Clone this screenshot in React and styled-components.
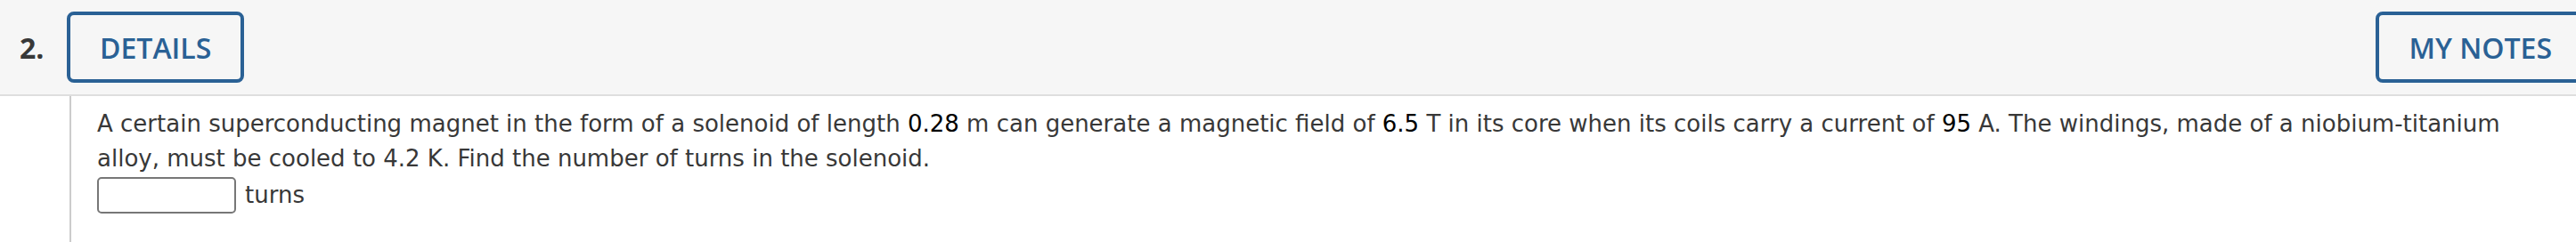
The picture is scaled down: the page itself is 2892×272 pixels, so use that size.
import styled, { createGlobalStyle } from "styled-components";

const GlobalStyle = createGlobalStyle`
  html, body {
    margin: 0;
    padding: 0;
    background: #fff;
    overflow: hidden;
  }
`;

function App() {
  return (
    <>
      <GlobalStyle />
      <Question>
        <Header>
          <Number>2.</Number>
          <HeaderButton>DETAILS</HeaderButton>
          <Spacer />
          <HeaderButton $clipped>MY NOTES</HeaderButton>
        </Header>
        <Body>
          <Gutter />
          <Content>
            <Text>
              A certain superconducting magnet in the form of a solenoid of length{" "}
              <Value>0.28</Value> m can generate a magnetic field of <Value>6.5</Value> T
              in its core when its coils carry a current of <Value>95</Value> A. The
              windings, made of a <NoWrap>niobium-titanium</NoWrap> alloy, must be cooled
              to 4.2 K. Find the number of turns in the solenoid.
            </Text>
            <AnswerRow>
              <AnswerInput type="text" />
              <Unit>turns</Unit>
            </AnswerRow>
          </Content>
        </Body>
      </Question>
    </>
  );
}

export default App;

const Question = styled.div`
  width: 2892px;
  height: 272px;
  display: flex;
  flex-direction: column;
  overflow: hidden;
`;

const Header = styled.div`
  display: flex;
  align-items: center;
  height: 108px;
  box-sizing: border-box;
  padding-left: 22px;
  background-color: #f6f6f6;
  border-bottom: 2px solid #dedede;
  flex-shrink: 0;
`;

const Number = styled.div`
  font-family: "Open Sans", sans-serif;
  font-weight: 700;
  font-size: 32px;
  color: #383838;
  width: 53px;
`;

const HeaderButton = styled.button`
  height: 80px;
  box-sizing: border-box;
  padding: 0 33px;
  margin-right: ${(p) => (p.$clipped ? "-10px" : "0")};
  flex-shrink: 0;
  background: transparent;
  border: 4px solid #2a6195;
  border-radius: 8px;
  color: #2a6195;
  font-family: "Open Sans", sans-serif;
  font-weight: 600;
  font-size: 32px;
  cursor: pointer;
`;

const Spacer = styled.div`
  flex: 1;
`;

const Body = styled.div`
  display: flex;
  flex: 1;
`;

const Gutter = styled.div`
  width: 78px;
  border-right: 2px solid #cccccc;
  flex-shrink: 0;
`;

const Content = styled.div`
  flex: 1;
  padding: 12px 16px 0 29px;
  font-family: "DejaVu Sans", Verdana, sans-serif;
  font-size: 26px;
  line-height: 39px;
  color: #383838;
`;

const Text = styled.div``;

const Value = styled.span`
  color: #000;
`;

const NoWrap = styled.span`
  white-space: nowrap;
`;

const AnswerRow = styled.div`
  display: flex;
  align-items: center;
  gap: 10px;
  margin-top: 1px;
`;

const AnswerInput = styled.input`
  width: 156px;
  height: 41px;
  box-sizing: border-box;
  border: 2px solid #777;
  border-radius: 5px;
  background: #fff;
  outline: none;
`;

const Unit = styled.span``;
